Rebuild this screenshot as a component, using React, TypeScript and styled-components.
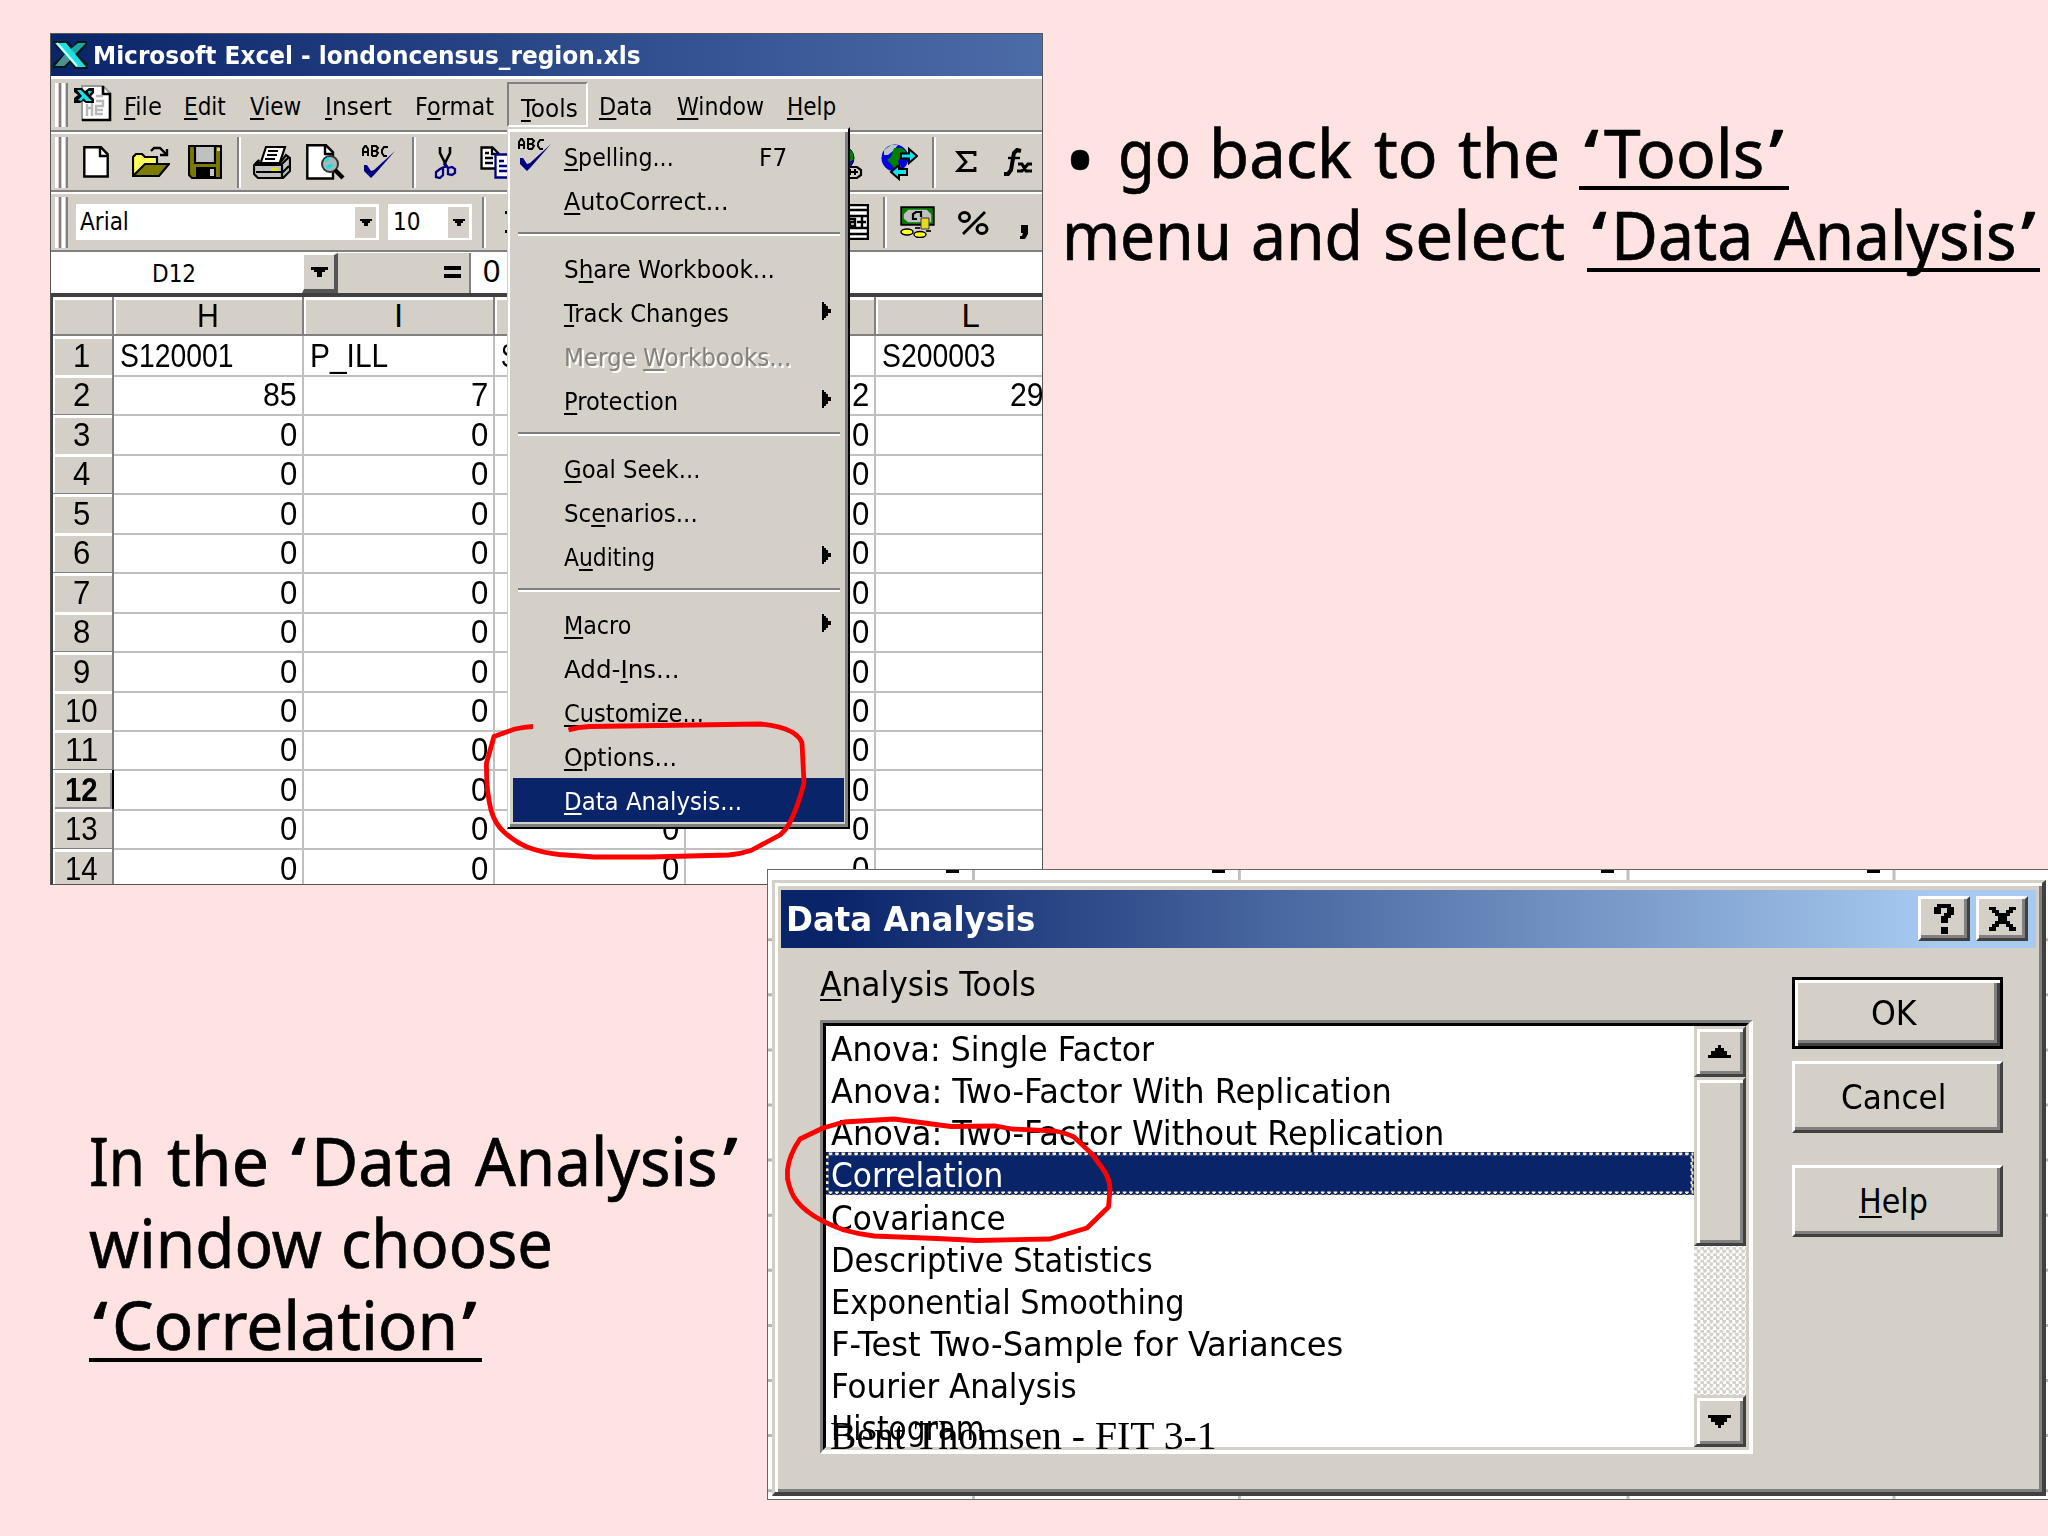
import React, { useLayoutEffect, useRef, useState } from "react";
import styled, { createGlobalStyle, css } from "styled-components";

const face = "#d4d0c8";
const navy = "#0a246a";
const ui = `"DejaVu Sans Condensed", "DejaVu Sans", "Noto Sans", sans-serif`;
const sheetFont = `"Liberation Sans", Arial, sans-serif`;
const slideFont = `"Noto Sans", "Open Sans", sans-serif`;

const Global = createGlobalStyle`
  *, *::before, *::after { box-sizing: border-box; }
  html, body { margin: 0; padding: 0; background: #ffe3e3; overflow: hidden; }
`;

/* ---------- text stretched to a fixed advance ---------- */
const FitBox = styled.span<{ $w: number }>`
  display: inline-block;
  flex: none;
  width: ${(p) => p.$w}px;
  white-space: pre;
  text-align: left;
`;
const FitInner = styled.span`
  display: inline-block;
  transform-origin: 0 50%;
`;
function Fit({ w, children }: { w: number; children: React.ReactNode }) {
  const ref = useRef<HTMLSpanElement>(null);
  const [scale, setScale] = useState(1);
  useLayoutEffect(() => {
    if (ref.current && ref.current.offsetWidth) setScale(w / ref.current.offsetWidth);
  }, [w]);
  return (
    <FitBox $w={w}>
      <FitInner ref={ref} style={{ transform: `scaleX(${scale})` }}>
        {children}
      </FitInner>
    </FitBox>
  );
}

const Key = styled.span`
  text-decoration: underline;
  text-decoration-thickness: 2px;
  text-underline-offset: 3px;
  text-decoration-skip-ink: none;
`;
/* "&File" marks F as the access key */
function Mnemonic({ text }: { text: string }) {
  const i = text.indexOf("&");
  if (i < 0) return <>{text}</>;
  return (
    <>
      {text.slice(0, i)}
      <Key>{text[i + 1]}</Key>
      {text.slice(i + 2)}
    </>
  );
}

/* ---------- slide ---------- */
const Slide = styled.main`
  position: relative;
  width: 2048px;
  height: 1536px;
  overflow: hidden;
  background: #ffe3e3;
  color: #000;
`;
const Note = styled.div<{ $x: number; $y: number }>`
  position: absolute;
  left: ${(p) => p.$x}px;
  top: ${(p) => p.$y}px;
  font: 68px/82px ${slideFont};
  -webkit-text-stroke: 0.7px #000;
`;
const NoteLine = styled.div`
  display: flex;
  height: 82px;
`;
const Bullet = styled.span`
  flex: none;
  width: 53px;
  font-size: 80px;
  line-height: 94px;
`;
const Space = styled.span<{ $w: number }>`
  flex: none;
  width: ${(p) => p.$w}px;
`;
const Underlined = styled.span`
  display: flex;
  height: 79px;
  border-bottom: 4.5px solid #000;
`;
const Footer = styled.div`
  position: absolute;
  left: 830px;
  top: 1413px;
  font: 40px/46px "Liberation Serif", "Times New Roman", serif;
`;
const Ink = styled.svg`
  position: absolute;
  left: 0;
  top: 0;
  pointer-events: none;
`;

/* ---------- Excel window ---------- */
const Excel = styled.section`
  position: absolute;
  left: 50px;
  top: 33px;
  width: 993px;
  height: 852px;
  overflow: hidden;
  display: flex;
  flex-direction: column;
  border: 1px solid #555;
  background: ${face};
  font: 24px/44px ${ui};
`;
const ExcelTitle = styled.header`
  flex: none;
  height: 42px;
  display: flex;
  align-items: center;
  padding-left: 1px;
  background: linear-gradient(90deg, ${navy}, #4c6ca8);
  color: #fff;
  font: bold 25px/43px ${ui};
`;
const TitleText = styled.span`
  margin-left: 5px;
`;
const Bar = styled.div<{ $h: number; $light?: boolean }>`
  flex: none;
  display: flex;
  align-items: center;
  height: ${(p) => p.$h}px;
  border-top: ${(p) => (p.$light ? 3 : 2)}px solid #fff;
  border-bottom: 2px solid #808080;
  padding-left: 4px;
`;
const Grip = styled.span`
  flex: none;
  width: 6px;
  height: 44px;
  margin-right: 1px;
  border-left: 3px solid #fff;
  border-right: 2px solid #808080;
`;
const GripTall = styled(Grip)`
  height: 51px;
`;
const MenuName = styled.span<{ $gap: number }>`
  flex: none;
  margin-left: ${(p) => p.$gap}px;
  line-height: 55px;
  height: 50px;
`;
const MenuOpen = styled.span`
  flex: none;
  align-self: flex-start;
  margin: 3px 0 0 13px;
  width: 81px;
  height: 45px;
  padding-left: 12px;
  line-height: 50px;
  border: 2px solid #fff;
  border-top-color: #808080;
  border-left-color: #808080;
`;
const Divider = styled.span<{ $gap: number }>`
  flex: none;
  width: 4px;
  height: 51px;
  margin-left: ${(p) => p.$gap}px;
  border-left: 2px solid #808080;
  border-right: 2px solid #fff;
`;
const Icon = styled.svg<{ $gap?: number; $drop?: number }>`
  flex: none;
  display: block;
  margin-left: ${(p) => p.$gap || 0}px;
  margin-top: ${(p) => p.$drop || 0}px;
`;
const Combo = styled.div<{ $gap: number; $w: number; $inset: number }>`
  flex: none;
  display: flex;
  align-items: center;
  justify-content: space-between;
  margin-left: ${(p) => p.$gap}px;
  width: ${(p) => p.$w}px;
  height: 36px;
  padding: 0 3px 0 ${(p) => p.$inset}px;
  background: #fff;
  line-height: 34px;
`;
const ComboArrow = styled.span`
  display: flex;
  align-items: center;
  justify-content: center;
  width: 21px;
  height: 31px;
  background: ${face};
`;
const FormulaBar = styled.div`
  flex: none;
  display: flex;
  height: 41px;
  border-top: 1px solid #fff;
  line-height: 41px;
`;
const NameBox = styled.div`
  flex: none;
  width: 251px;
  padding: 1px 0 0 101px;
  background: #fff;
`;
const NameArrow = styled.div`
  flex: none;
  width: 36px;
  display: flex;
  align-items: center;
  justify-content: center;
  border: solid;
  border-width: 2px 4px 4px 2px;
  border-color: #fff #555 #555 #fff;
  background: ${face};
`;
const Equals = styled.div`
  flex: none;
  width: 133px;
  display: flex;
  align-items: flex-start;
  padding: 13px 0 0 106px;
  border-right: 2px solid #808080;
`;
const FormulaValue = styled.div`
  flex: 1;
  padding-left: 12px;
  background: #fff;
  font: 31px/38px ${sheetFont};
`;
const Sheet = styled.div`
  flex: none;
  height: 600px;
  border-top: 4px solid #404040;
  border-left: 2px solid #404040;
  background: #fff;
  font: 33px/39px ${sheetFont};
`;
const SheetRow = styled.div<{ $h: number }>`
  display: grid;
  grid-template-columns: 60.5px repeat(5, 190.7px);
  height: ${(p) => p.$h}px;
`;
const HeadCell = styled.div<{ $active?: boolean; $column?: boolean }>`
  display: flex;
  justify-content: center;
  padding-right: ${(p) => (p.$column ? 0 : 2)}px;
  line-height: ${(p) => (p.$column ? 37 : 39)}px;
  background: ${face};
  border: solid #808080;
  border-width: 0 2px 2px 0;
  box-shadow: inset 2px 3px 0 #fff;
  ${(p) =>
    p.$active &&
    css`
      border-color: #000;
      box-shadow: inset 2px 3px 0 #fff, inset -2px -2px 0 #909090;
      font-weight: bold;
    `}
`;
const Cell = styled.div<{ $right?: boolean; $pad?: number }>`
  display: flex;
  justify-content: ${(p) => (p.$right ? "flex-end" : "flex-start")};
  padding: 0 ${(p) => p.$pad || 5}px 0 6px;
  border: solid #c0c0c0;
  border-width: 0 2px 2px 0;
`;

/* ---------- Tools menu ---------- */
const Menu = styled.nav`
  position: absolute;
  left: 507px;
  top: 127px;
  width: 343px;
  height: 702px;
  display: flex;
  flex-direction: column;
  padding: 2px 1px 0 3px;
  background: ${face};
  border: solid;
  border-width: 2px 2px 2px 1px;
  border-color: ${face} #000 #000 ${face};
  box-shadow: inset 2px 3px 0 #fff, inset -3px -3px 0 #808080;
  font: 24px/48px ${ui};
`;
const MenuItem = styled.div<{ $hot?: boolean; $off?: boolean }>`
  flex: none;
  display: flex;
  align-items: flex-start;
  height: 44px;
  width: 331px;
  margin-left: 2px;
  ${(p) => p.$hot && `background: ${navy}; color: #fff;`}
  ${(p) => p.$off && `color: #85827c; text-shadow: 2px 2px 0 #fff;`}
`;
const MenuList = styled.div`
  padding-top: 3px;
`;
const Gutter = styled.span`
  flex: none;
  width: 51px;
  padding: 4px 0 0 5px;
`;
const Accel = styled.span`
  margin-left: 85px;
`;
const Sub = styled.svg`
  margin: 12px 12px 0 auto;
`;
const Rule = styled.div`
  height: 24px;
  margin: 0 7px;
  padding-top: 10px;
  &::after {
    content: "";
    display: block;
    height: 4px;
    border-top: 2px solid #808080;
    border-bottom: 2px solid #fff;
  }
`;

/* ---------- Data Analysis dialog ---------- */
const Backdrop = styled.section`
  position: absolute;
  left: 767px;
  top: 869px;
  width: 1290px;
  height: 631px;
  overflow: hidden;
  border: 1px solid #666;
  background: #fff;
`;
const GridTicks = styled.svg`
  position: absolute;
  left: 0;
  top: 0;
`;
const Dialog = styled.div`
  position: absolute;
  left: 4px;
  top: 10px;
  width: 1274px;
  height: 616px;
  display: flex;
  flex-direction: column;
  padding: 4px 4px 0 3px;
  background: ${face};
  border: solid;
  border-width: 3px 4px 4px 3px;
  border-color: ${face} #404040 #404040 ${face};
  box-shadow: inset 3px 3px 0 #fff, inset -3px -3px 0 #808080;
  font: 33.6px/46px ${ui};
`;
const DialogTitle = styled.header`
  flex: none;
  height: 58px;
  margin: 3px 2px 0 3px;
  display: flex;
  align-items: center;
  padding: 0 8px 0 5px;
  background: linear-gradient(90deg, ${navy} 0%, ${navy} 4%, #a6caf0 92%);
  color: #fff;
  font: bold 34px/58px ${ui};
`;
const raised = css`
  background: ${face};
  border: 3px solid;
  border-color: #fff #404040 #404040 #fff;
  box-shadow: inset -3px -3px 0 #808080;
`;
const TitleButton = styled.button<{ $push?: boolean }>`
  ${raised}
  flex: none;
  width: 52px;
  height: 45px;
  padding: 0;
  display: flex;
  align-items: center;
  justify-content: center;
  margin-left: ${(p) => (p.$push ? "auto" : "6px")};
  margin-bottom: 1px;
`;
const DialogBody = styled.div`
  flex: 1;
  display: flex;
`;
const ListColumn = styled.div`
  flex: none;
  width: 933px;
  margin-left: 41.5px;
`;
const Label = styled.div`
  height: 72px;
  padding: 14px 0 0;
`;
const ListFrame = styled.div`
  display: flex;
  height: 434px;
  border: solid;
  border-width: 3px 4px 4px 3px;
  border-color: #808080 #fff #fff #808080;
`;
const ListInner = styled.div`
  flex: 1;
  display: flex;
  border: 3px solid;
  border-color: #000 ${face} ${face} #000;
  background: #fff;
`;
const Options = styled.div`
  flex: 1;
  height: 421px;
  overflow: hidden;
`;
const Option = styled.div<{ $hot?: boolean }>`
  position: relative;
  height: 42.15px;
  padding-left: 5px;
  line-height: 48px;
  ${(p) =>
    p.$hot &&
    css`
      background: ${navy};
      color: #fff;
      &::after {
        content: "";
        position: absolute;
        inset: 0;
        padding: 3px;
        background: repeating-conic-gradient(#fff3c4 0 25%, ${navy} 0 50%) 0 0 / 6.4px 6.4px;
        clip-path: polygon(0 0, 100% 0, 100% 100%, 0 100%, 0 3px, 3px 3px, 3px calc(100% - 3px), calc(100% - 3px) calc(100% - 3px), calc(100% - 3px) 3px, 0 3px);
      }
    `}
`;
const Scroll = styled.div`
  flex: none;
  width: 52px;
  display: flex;
  flex-direction: column;
  background: repeating-conic-gradient(${face} 0 25%, #fff 0 50%) 0 0 / 6.4px 6.4px;
`;
const ScrollPart = styled.div<{ $h: number; $end?: boolean }>`
  flex: none;
  height: ${(p) => p.$h}px;
  margin-top: ${(p) => (p.$end ? "auto" : 0)};
  display: flex;
  align-items: center;
  justify-content: center;
  background: ${face};
  border: 3px solid;
  border-color: ${face} #404040 #404040 ${face};
  box-shadow: inset 3px 3px 0 #fff, inset -3px -3px 0 #808080;
`;
const Buttons = styled.div`
  width: 211px;
  margin-left: 39.5px;
  padding-top: 29px;
`;
const Push = styled.button<{ $default?: boolean; $gap?: number }>`
  ${raised}
  display: flex;
  justify-content: center;
  align-items: flex-start;
  width: 211px;
  height: 72px;
  margin: 0 0 ${(p) => p.$gap || 0}px;
  padding: 0 8px 0 0;
  color: #000;
  font: 33.6px/67px ${ui};
  ${(p) =>
    p.$default &&
    css`
      border-color: #000;
      box-shadow: inset 3px 3px 0 #fff, inset -3px -3px 0 #404040, inset -6px -6px 0 #808080;
    `}
`;

/* ---------- icons ---------- */
const Down = ({ s = 12 }: { s?: number }) => (
  <svg width={s} height={s / 2 + 1} viewBox="0 0 12 7" shapeRendering="crispEdges">
    <path d="M0 0h12v2H10v2H8v3H4V4H2V2H0z" />
  </svg>
);
const Check = ({ gap = 0 }: { gap?: number }) => (
  <Icon $gap={gap} width="34" height="34" viewBox="0 0 34 34" fill="none">
    <path d="M1 11V4l2-3h1l2 3v7M1 7h5M10 11V1h4l2 2-2 3h-4M14 6l2 2-2 3h-4M26 2h-4l-2 3v3l2 3h3" stroke="#000" strokeWidth="2" />
    <path d="M2 20v6l7 7 4-4 20-23-21 19-3 1-4-6z" fill="#000080" />
  </Icon>
);
const ExcelLogo = () => (
  <Icon width="36" height="30" viewBox="0 0 36 30">
    <path d="M1 1h15l5 6 4-6h10v4L26 15l10 9v5H23l-5-6-5 5H1v-4l11-10L4 7z" fill="#001818" />
    <path d="M3 26h9L34 3h-8L14 13z" fill="#1fa5a5" />
    <path d="M4 26h8l6-6-5-4z" fill="#548c8c" />
    <path d="M3 3h11l20 24H24z" fill="#19e0e6" />
    <path d="M5 3l20 23" stroke="#d9ffff" strokeWidth="2" />
  </Icon>
);
const DocIcon = () => (
  <Icon $gap={5} $drop={-3} width="38" height="38" viewBox="0 0 38 38">
    <path d="M8 2h21l7 7v27H8z" fill="#fff" stroke="#999" strokeWidth="2" />
    <path d="M29 2v8h7v26H8" fill="none" stroke="#000" strokeWidth="2.6" />
    <path d="M13 20v12M18 18v14M13 24h6M22 12h7M22 17h7v5h-7v8h7M22 26h7" stroke="#b8b8b8" strokeWidth="2.4" fill="none" />
    <path d="M0 4h8l3 3 4-3h5v5l-3 3 3 3v4h-8l-3-2-3 2H0v-5l4-3-4-3z" fill="#000" />
    <path d="M3 6h4l11 11h-6zM4 16l4-4 2 2-3 3zM14 7h4l-3 4z" fill="#19e0e6" />
  </Icon>
);
const NewIcon = () => (
  <Icon $gap={14} width="26" height="32" viewBox="0 0 26 32">
    <path d="M1.3 1.3H18l6.700 7V30.500H1.300z" fill="#fff" stroke="#000" strokeWidth="2.4" />
    <path d="M17 1v9h8" fill="none" stroke="#000" strokeWidth="2.4" />
  </Icon>
);
const OpenIcon = () => (
  <Icon $gap={23} width="38" height="32" viewBox="0 0 38 32">
    <path d="M1 30V11l3-3h6l3 3h12v7" fill="#ffff5a" stroke="#000" strokeWidth="2.2" />
    <path d="M3 12h20v6H12L3 28z" fill="#ffff5a" />
    <path d="M1 30l12-12h24L27 30z" fill="#7b7b00" stroke="#000" strokeWidth="2.2" />
    <path d="M19 5l3-3h6l6 6M35 3v6h-7" fill="none" stroke="#000" strokeWidth="2.4" />
  </Icon>
);
const SaveIcon = () => (
  <Icon $gap={18} width="34" height="34" viewBox="0 0 34 34">
    <path d="M1 1h32v32H4l-3-3z" fill="#7b7b00" stroke="#000" strokeWidth="2.2" />
    <path d="M7 1h20v17H7z" fill="#c0c0c0" stroke="#000" strokeWidth="2.2" />
    <path d="M8 22h20v11H8z" />
    <path d="M22 24h4v7h-4z" fill="#c8c8c8" />
    <path d="M29 3h3v3h-3z" fill="#ccc" />
  </Icon>
);
const PrintIcon = () => (
  <Icon $gap={12} width="38" height="34" viewBox="0 0 38 34" stroke="#000" strokeWidth="2.2">
    <path d="M8 17l5-15h19l-5 15" fill="#fff" />
    <path d="M15 6h10M14 10h10M12 14h10" />
    <path d="M6 15l-5 5v9l4 4h25l7-7V13l-4-3-6 8H5z" fill="#c0c0c0" />
    <path d="M2 20h26l8-8M3 27h27l6-6M29 20v12" fill="none" />
    <path d="M18 23h7v3h-7z" fill="#e6e600" stroke="none" />
  </Icon>
);
const PreviewIcon = () => (
  <Icon $gap={15} width="39" height="36" viewBox="0 0 39 36">
    <path d="M1.300 1.300H20l7 7V34.500H1.300z" fill="#fff" stroke="#000" strokeWidth="2.400" />
    <path d="M19 1v9h8" fill="none" stroke="#000" strokeWidth="2.400" />
    <circle cx="24" cy="20" r="8" fill="#a8b8b8" stroke="#333" strokeWidth="2" />
    <path d="M19 17l4-3M20 23h4l2-3" stroke="#19e0e6" strokeWidth="3" />
    <path d="M29 26l8 8" stroke="#000" strokeWidth="4.500" />
  </Icon>
);
const CutIcon = () => (
  <Icon $gap={17} width="24" height="33" viewBox="0 0 24 33" fill="none">
    <path d="M7 1v6l6 12M17 1v6l-6 12" stroke="#000" strokeWidth="2.600" />
    <path d="M12 18v4M11 21l-4 2-4 3v5l4 1 3-3v-8M13 19l2 3v6l4 1 3-2v-4l-3-2-4 1" stroke="#000080" strokeWidth="2.300" />
  </Icon>
);
const CopyIcon = () => (
  <Icon $gap={23} width="38" height="33" viewBox="0 0 38 33" strokeWidth="2.300">
    <path d="M1.500 1.500h11l6 6v15h-17z" fill="#fff" stroke="#000" />
    <path d="M12 2v6h6M5 7h4M5 12h8M5 17h8" fill="none" stroke="#000" />
    <path d="M15.500 8.500h12l7 7v16h-19z" fill="#fff" stroke="#000080" />
    <path d="M19 15h5M19 20h10M19 25h10" stroke="#000080" />
  </Icon>
);
const LinkGlobe = () => (
  <Icon width="36" height="36" viewBox="0 0 36 36">
    <circle cx="14" cy="14" r="12" fill="#0000c8" stroke="#000" />
    <path d="M14 3h6l5 6v7l-5 3-6-5z" fill="#008000" />
    <path d="M14 23h15l4 3v5l-4 3H14z" fill={face} stroke="#000" strokeWidth="2.200" />
    <path d="M18 28h12M22 25v6M27 25v6" stroke="#000" strokeWidth="2" />
  </Icon>
);
const WebGlobe = () => (
  <Icon $gap={17} width="37" height="37" viewBox="0 0 37 37">
    <circle cx="14" cy="14" r="13.500" fill="#0000e0" />
    <path d="M3 6l7-5h7l-5 6-5 4H3z" fill="#b8c8c8" />
    <path d="M13 4h8l5 4-7 5-2 5 3 4-5 4-5-6-4-4 4-3z" fill="#008000" />
    <path d="M20 9.500h8V5l8 7-8 7v-4.500h-8z" fill="#19e0f0" stroke="#000" strokeWidth="2" />
    <path d="M26 25h-8v-4l-8 7 8 7v-4h8z" fill="#19e0f0" stroke="#000" strokeWidth="2" />
  </Icon>
);
const SigmaIcon = () => (
  <Icon $gap={19} width="22" height="22" viewBox="0 0 22 22">
    <path d="M20 5V1.500H3l8 9.500-8 8.500h17V16" fill="none" stroke="#000" strokeWidth="2.800" />
  </Icon>
);
const FxIcon = () => (
  <Icon $gap={27} width="30" height="28" viewBox="0 0 30 28" fill="none" stroke="#000">
    <path d="M17 3l-4-1-3 3-3 17-3 4H0" strokeWidth="4" />
    <path d="M4 10h12" strokeWidth="2.400" />
    <path d="M14 16h4l4 7h6M28 16h-4l-6 7h-5" strokeWidth="3.200" />
  </Icon>
);
const MergeIcon = () => (
  <Icon width="36" height="36" viewBox="0 0 36 36" strokeWidth="2.400">
    <path d="M1 1h34v34H1z" fill="#fff" stroke="#000" />
    <path d="M1 6h34M1 12h34M1 24h34M1 30h34" stroke="#000" />
    <path d="M17 15h5v7h-5v-4h5" fill="none" stroke="#000" />
    <path d="M24 18h9M29 13v10" stroke="#000" />
  </Icon>
);
const MoneyIcon = () => (
  <Icon $gap={13} width="36" height="32" viewBox="0 0 36 32">
    <path d="M1.500 1.500h32v17h-32z" fill="#c0c0c0" stroke="#000" strokeWidth="2.400" />
    <path d="M3 3h6L3 9zM32 3h-6l6 6zM3 17h6l-6-5z" fill="#008000" />
    <path d="M3 3h29v14H3z" fill="none" stroke="#008000" strokeWidth="1.500" />
    <path d="M17 13h-4V8l3-2h5v5" fill="none" stroke="#000" strokeWidth="2.200" />
    <path d="M21 12h8v11h-8z" fill="#e6d820" stroke="#333" />
    <ellipse cx="7" cy="26" rx="6" ry="3" fill="#ffff20" stroke="#000" strokeWidth="1.500" />
    <ellipse cx="20" cy="28.500" rx="6" ry="3" fill="#ffff20" stroke="#000" strokeWidth="1.500" />
    <path d="M15 22h5M26 25h5" stroke="#222" strokeWidth="2" />
  </Icon>
);
const PercentIcon = () => (
  <Icon $gap={22} $drop={1} width="31" height="24" viewBox="0 0 31 24" fill="none" stroke="#000">
    <ellipse cx="6.500" cy="6" rx="5" ry="4.500" strokeWidth="3" />
    <ellipse cx="24" cy="18" rx="5" ry="4.500" strokeWidth="3" />
    <path d="M27 1L5 23" strokeWidth="2.800" />
  </Icon>
);
const CommaIcon = () => (
  <Icon $gap={30} $drop={20} width="10" height="14" viewBox="0 0 10 14">
    <path d="M2 0h7v9l-3 5H1v-3h2l1-3H2z" />
  </Icon>
);

/* ---------- data ---------- */
type Entry = { t: string; w: number; key?: string; sub?: boolean; off?: boolean; hot?: boolean; check?: boolean } | null;
const menuEntries: Entry[] = [
  { t: "&Spelling...", w: 110, key: "F7", check: true },
  { t: "&AutoCorrect...", w: 164 },
  null,
  { t: "S&hare Workbook...", w: 211 },
  { t: "&Track Changes", w: 165, sub: true },
  { t: "Merge &Workbooks...", w: 227, off: true },
  { t: "&Protection", w: 114, sub: true },
  null,
  { t: "&Goal Seek...", w: 136 },
  { t: "Sc&enarios...", w: 134 },
  { t: "A&uditing", w: 91, sub: true },
  null,
  { t: "&Macro", w: 67, sub: true },
  { t: "Add-&Ins...", w: 115 },
  { t: "&Customize...", w: 140 },
  { t: "&Options...", w: 113 },
  { t: "&Data Analysis...", w: 178, hot: true },
];
const tools: [string, number][] = [
  ["Anova: Single Factor", 323],
  ["Anova: Two-Factor With Replication", 561],
  ["Anova: Two-Factor Without Replication", 613],
  ["Correlation", 172],
  ["Covariance", 175],
  ["Descriptive Statistics", 322],
  ["Exponential Smoothing", 354],
  ["F-Test Two-Sample for Variances", 512],
  ["Fourier Analysis", 246],
  ["Histogram", 154],
];
const ticksX = [973.5, 1239.400, 1628, 1894];
const dashX = [946, 1212, 1601, 1867];

function ToolsMenu() {
  return (
    <Menu>
      <MenuList>
        {menuEntries.map((e, i) =>
          e === null ? (
            <Rule key={i} />
          ) : (
            <MenuItem key={i} $hot={e.hot} $off={e.off}>
              <Gutter>{e.check && <Check />}</Gutter>
              <Fit w={e.w}>
                <Mnemonic text={e.t} />
              </Fit>
              {e.key && (
                <Accel>
                  <Fit w={28}>{e.key}</Fit>
                </Accel>
              )}
              {e.sub && (
                <Sub width="10" height="18" viewBox="0 0 10 18" shapeRendering="crispEdges">
                  <path d="M0 0h2v2h2v2h2v3h3v4H6v3H4v2H2v2H0z" />
                </Sub>
              )}
            </MenuItem>
          )
        )}
      </MenuList>
    </Menu>
  );
}

function SheetGrid() {
  const rows = Array.from({ length: 14 }, (_, i) => i + 1);
  const values = (r: number): string[] =>
    r === 1
      ? ["S120001", "P_ILL", "S", "", "S200003"]
      : r === 2
      ? ["85", "7", "", "2", "29"]
      : ["0", "0", "0", "0", ""];
  return (
    <Sheet>
      <SheetRow $h={39}>
        <HeadCell />
        {["H", "I", "J", "K", "L"].map((c) => (
          <HeadCell key={c} $column>
            <Fit w={c === "I" ? 9 : c === "L" ? 18 : 22}>{c}</Fit>
          </HeadCell>
        ))}
      </SheetRow>
      {rows.map((r) => (
        <SheetRow key={r} $h={39.450}>
          <HeadCell $active={r === 12}>
            <Fit w={r > 9 ? 33 : 17}>{r}</Fit>
          </HeadCell>
          {values(r).map((v, i) => {
            const right = r > 1;
            const width = !right ? (v === "P_ILL" ? 78 : v.length * 16.200) : v.length * 17;
            return (
              <Cell key={i} $right={right} $pad={i === 4 ? 21 : 5}>
                {v && <Fit w={width}>{v}</Fit>}
              </Cell>
            );
          })}
        </SheetRow>
      ))}
    </Sheet>
  );
}

function ExcelWindow() {
  return (
    <Excel>
      <ExcelTitle>
        <ExcelLogo />
        <TitleText>
          <Fit w={547}>Microsoft Excel - londoncensus_region.xls</Fit>
        </TitleText>
      </ExcelTitle>
      <Bar $h={56} $light>
        <Grip />
        <Grip />
        <DocIcon />
        <MenuName $gap={12}><Fit w={38}><Mnemonic text="&File" /></Fit></MenuName>
        <MenuName $gap={22}><Fit w={42}><Mnemonic text="&Edit" /></Fit></MenuName>
        <MenuName $gap={24}><Fit w={51}><Mnemonic text="&View" /></Fit></MenuName>
        <MenuName $gap={24}><Fit w={67}><Mnemonic text="&Insert" /></Fit></MenuName>
        <MenuName $gap={23}><Fit w={79}><Mnemonic text="F&ormat" /></Fit></MenuName>
        <MenuOpen><Fit w={57}><Mnemonic text="&Tools" /></Fit></MenuOpen>
        <MenuName $gap={11}><Fit w={54}><Mnemonic text="&Data" /></Fit></MenuName>
        <MenuName $gap={24}><Fit w={87}><Mnemonic text="&Window" /></Fit></MenuName>
        <MenuName $gap={23}><Fit w={49}><Mnemonic text="&Help" /></Fit></MenuName>
      </Bar>
      <Bar $h={60}>
        <GripTall />
        <GripTall />
        <NewIcon />
        <OpenIcon />
        <SaveIcon />
        <Divider $gap={15} />
        <PrintIcon />
        <PreviewIcon />
        <Check gap={17} />
        <Divider $gap={16} />
        <CutIcon />
        <CopyIcon />
        <Space $w={310} />
        <LinkGlobe />
        <WebGlobe />
        <Divider $gap={14} />
        <SigmaIcon />
        <FxIcon />
      </Bar>
      <Bar $h={60}>
        <GripTall />
        <GripTall />
        <Combo $gap={7} $w={303} $inset={4}>
          <Fit w={49}>Arial</Fit>
          <ComboArrow><Down /></ComboArrow>
        </Combo>
        <Combo $gap={9} $w={84} $inset={5}>
          <Fit w={27}>10</Fit>
          <ComboArrow><Down /></ComboArrow>
        </Combo>
        <Divider $gap={10} />
        <Icon $gap={19} width="4" height="24" viewBox="0 0 4 24">
          <path d="M0 1h3v3H0zM0 20h3v3H0z" />
        </Icon>
        <Space $w={324} />
        <MergeIcon />
        <Divider $gap={14} />
        <MoneyIcon />
        <PercentIcon />
        <CommaIcon />
      </Bar>
      <FormulaBar>
        <NameBox><Fit w={44}>D12</Fit></NameBox>
        <NameArrow><Down s={17} /></NameArrow>
        <Equals>
          <svg width="17" height="13" viewBox="0 0 17 13"><path d="M0 0h17v4H0zM0 8h17v4H0z" /></svg>
        </Equals>
        <FormulaValue><Fit w={17}>0</Fit></FormulaValue>
      </FormulaBar>
      <SheetGrid />
    </Excel>
  );
}

function DataAnalysisDialog() {
  return (
    <Backdrop>
      <GridTicks width="1290" height="629" viewBox="768 870 1290 629">
        {ticksX.map((x) => (
          <path key={x} d={`M${x} 870V1499`} stroke="#c0c0c0" strokeWidth="3" />
        ))}
        {dashX.map((x) => (
          <path key={x} d={`M${x} 871.500h13`} stroke="#000" strokeWidth="3" />
        ))}
        {Array.from({ length: 11 }, (_, i) => (
          <path key={i} d={`M768 ${939.700 + i * 55.100}H2058`} stroke="#b5b5b5" strokeWidth="3" />
        ))}
      </GridTicks>
      <Dialog>
        <DialogTitle>
          <Fit w={249}>Data Analysis</Fit>
          <TitleButton $push>
            <svg width="20" height="30" viewBox="0 0 20 30" shapeRendering="crispEdges">
              <path d="M3 0h14v3h3v8h-3v3h-3v5H7v-7h3V9h3V4H7v6H0V3h3zM7 23h7v7H7z" />
            </svg>
          </TitleButton>
          <TitleButton>
            <svg width="27" height="24" viewBox="0 0 27 24" shapeRendering="crispEdges">
              <path d="M0 0h7v3h3v3h7V3h3V0h7v3h-3v3h-3v3h-3v5h3v3h3v3h3v4h-7v-4h-3v-3h-7v3H7v4H0v-4h3v-3h3v-3h3V9H6V6H3V3H0z" />
            </svg>
          </TitleButton>
        </DialogTitle>
        <DialogBody>
          <ListColumn>
            <Label><Fit w={216}><Mnemonic text="&Analysis Tools" /></Fit></Label>
            <ListFrame>
              <ListInner>
                <Options>
                  {tools.map(([t, w]) => (
                    <Option key={t} $hot={t === "Correlation"}><Fit w={w}>{t}</Fit></Option>
                  ))}
                </Options>
                <Scroll>
                  <ScrollPart $h={51}>
                    <svg width="23" height="13" viewBox="0 0 23 13" shapeRendering="crispEdges">
                      <path d="M10 0h3v3h3v3h3v4h4v3H0v-3h3V6h4V3h3z" />
                    </svg>
                  </ScrollPart>
                  <ScrollPart $h={169} />
                  <ScrollPart $h={52} $end>
                    <svg width="23" height="13" viewBox="0 0 23 13" shapeRendering="crispEdges">
                      <path d="M0 0h23v3h-4v4h-3v3h-3v3h-3v-3H7V7H3V3H0z" />
                    </svg>
                  </ScrollPart>
                </Scroll>
              </ListInner>
            </ListFrame>
          </ListColumn>
          <Buttons>
            <Push $default $gap={12}><Fit w={46}>OK</Fit></Push>
            <Push $gap={32}><Fit w={105}>Cancel</Fit></Push>
            <Push><Fit w={69}><Mnemonic text="&Help" /></Fit></Push>
          </Buttons>
        </DialogBody>
      </Dialog>
    </Backdrop>
  );
}

/* words of a line: numbers are gaps, pairs are a word and its advance */
type Run = number | [string, number];
const Words = ({ runs }: { runs: Run[] }) => (
  <>
    {runs.map((r, i) => (typeof r === "number" ? <Space key={i} $w={r} /> : <Fit key={i} w={r[1]}>{r[0]}</Fit>))}
  </>
);

export default function App() {
  return (
    <>
      <Global />
      <Slide>
        <ExcelWindow />
        <ToolsMenu />
        <Note $x={1062} $y={111}>
          <NoteLine>
            <Space $w={3} />
            <Bullet>•</Bullet>
            <Words runs={[["go", 73], 18, ["back", 143], 22, ["to", 64], 20, ["the", 102], 19]} />
            <Underlined>
              <Words runs={[5, ["‘", 15], 5, ["Tools", 160], 5, ["’", 15], 5]} />
            </Underlined>
          </NoteLine>
          <NoteLine>
            <Words runs={[["menu", 170], 19, ["and", 112], 20, ["select", 182], 22]} />
            <Underlined>
              <Words runs={[5, ["‘", 15], 4, ["Data", 142], 21, ["Analysis", 243], 4, ["’", 15], 4]} />
            </Underlined>
          </NoteLine>
        </Note>
        <Note $x={89} $y={1119}>
          <NoteLine>
            <Words runs={[["In", 56], 22, ["the", 102], 22, ["‘", 15], 5, ["Data", 143], 21, ["Analysis", 243], 5, ["’", 15]]} />
          </NoteLine>
          <NoteLine>
            <Words runs={[["window", 233], 19, ["choose", 212]]} />
          </NoteLine>
          <NoteLine>
            <Underlined>
              <Words runs={[4, ["‘", 15], 4, ["Correlation", 346], 4, ["’", 15], 5]} />
            </Underlined>
          </NoteLine>
        </Note>
        <DataAnalysisDialog />
        <Footer><Fit w={387}>Bent Thomsen - FIT 3-1</Fit></Footer>
        <Ink width="2048" height="1536" viewBox="0 0 2048 1536" fill="none" stroke="#f00" strokeWidth="4.800" strokeLinejoin="round">
          <path d="M533 726.500Q524 727 515 729L494 736.500 486.500 763Q486 790 491 810 495 824 504 832 515 842 527 847 543 853 559 854.500L594 857H650L729 855Q740 854 751 850.500L780 835Q788 828 792 818 799 803 804 783L802 743Q800 737 792 732 781 726 760 724L590 726.500Q578 727 568.500 730" />
          <path d="M787.500 1180V1170Q789 1155 800 1139L823 1128 844 1122 894 1119 951 1126.500 996 1126 1012 1129 1055 1131Q1066 1133 1074 1137L1092 1154 1105 1172Q1110 1181 1110 1190L1108.500 1207 1087 1228 1050 1239 977 1240.500 937 1238.500 874 1236Q858 1234 844 1230 827 1224 814 1216 800 1207 794 1197 789 1188 787.500 1178" />
        </Ink>
      </Slide>
    </>
  );
}
